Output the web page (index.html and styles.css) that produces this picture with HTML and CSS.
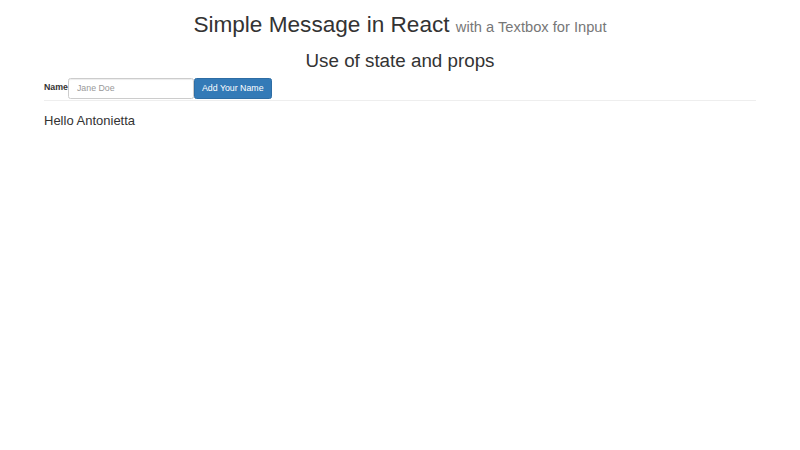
FILE: index.html
```html
<!DOCTYPE html>
<html>
  <head>
    <title>Simple Message in React</title>
    <meta charset="utf-8" />
    <meta name="viewport" content="width=device-width, initial-scale=1.0" />
    <link rel="stylesheet" href="styles.css">
  </head>
  <body>
    <div class="container">
      <h1 class="title">Simple Message in React <small>with a Textbox for Input</small></h1>
      <h2 class="subtitle">Use of state and props</h2>
      <form class="name-form">
        <label for="name">Name</label>
        <input id="name" type="text" placeholder="Jane Doe" />
        <button type="button" class="btn">Add Your Name</button>
      </form>
      <hr />
      <p class="hello">Hello Antonietta</p>
    </div>
  </body>
</html>
```

FILE: styles.css
```css
body {
  margin: 0;
  font-family: "Liberation Sans", Arial, sans-serif;
  font-size: 8.8px;
  color: #333;
  background: #fff;
}

.container {
  width: 712px;
  margin: 0 auto;
}

.title {
  margin: 0;
  padding-top: 13px;
  font-size: 22.6px;
  font-weight: 400;
  line-height: 1.1;
  text-align: center;
}

.title small {
  font-size: 65%;
  color: #777;
}

.subtitle {
  margin: 13px 0 0;
  font-size: 18.8px;
  font-weight: 400;
  line-height: 1.1;
  text-align: center;
}

.name-form {
  display: flex;
  align-items: flex-start;
  margin-top: 6px;
}

.name-form label {
  font-weight: 700;
  padding-top: 4px;
}

.name-form input {
  box-sizing: border-box;
  width: 126px;
  height: 21px;
  padding: 0 8px;
  border: 1px solid #ccc;
  border-radius: 2.5px;
  font: inherit;
  color: #555;
  box-shadow: inset 0 1px 1px rgba(0, 0, 0, .075);
}

.name-form input::placeholder {
  color: #999;
}

.btn {
  box-sizing: border-box;
  height: 21px;
  padding: 0 7px;
  border: 1px solid #2e6da4;
  border-radius: 2.5px;
  background: #337ab7;
  color: #fff;
  font: inherit;
}

hr {
  margin: 1px 0 0;
  border: 0;
  border-top: 1px solid #eee;
}

.hello {
  margin: 12px 0 0;
  font-size: 13px;
}
```
